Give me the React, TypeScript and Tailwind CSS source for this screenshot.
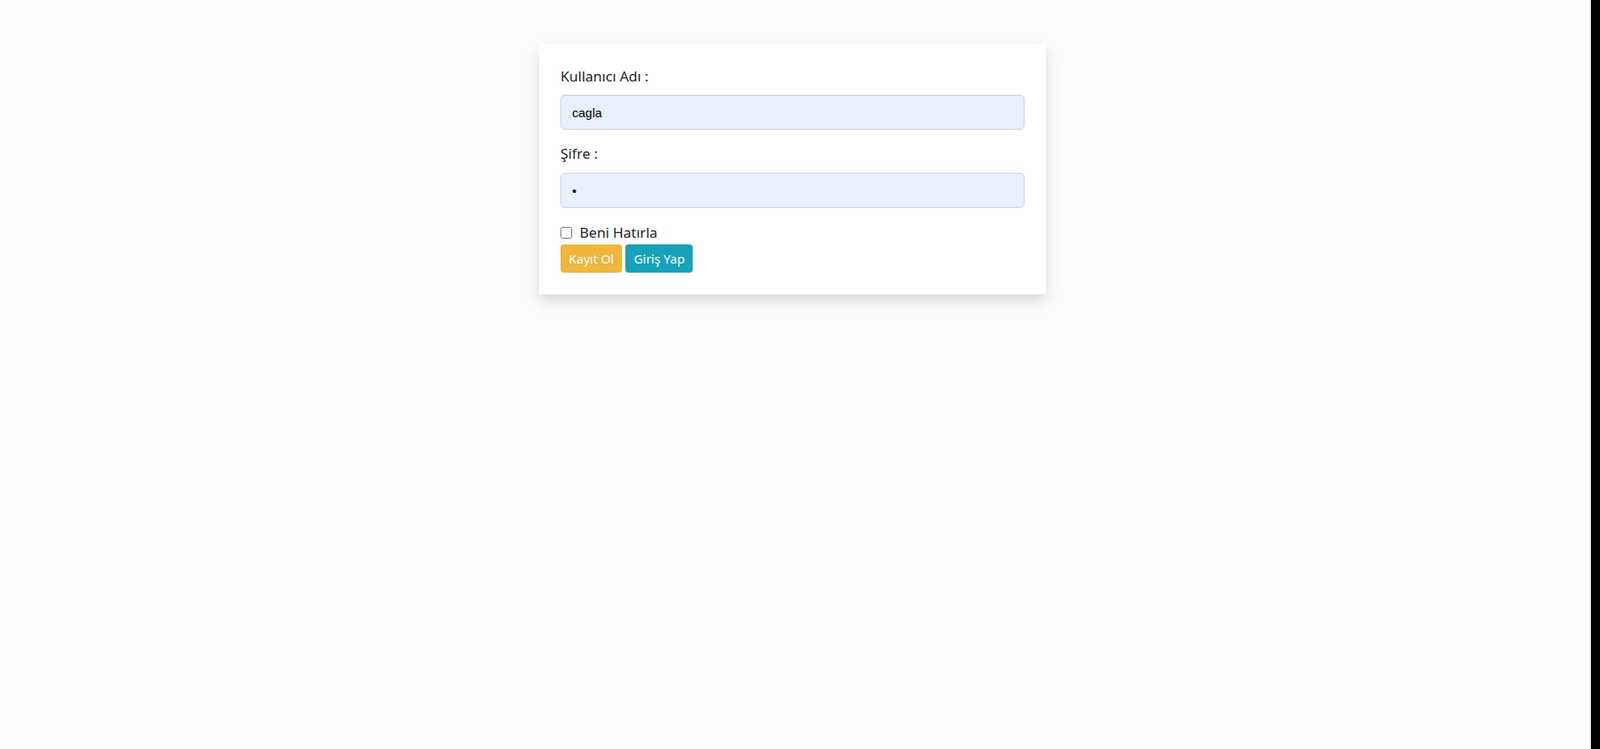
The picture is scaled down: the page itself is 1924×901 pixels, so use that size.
import { useState } from "react"

export default function App() {
  const [username, setUsername] = useState("cagla")
  const [password, setPassword] = useState("a")
  const [remember, setRemember] = useState(false)

  return (
    <div className="flex h-screen w-full bg-[#fdfdfd] font-['Noto_Sans',sans-serif]">
      <main className="flex flex-1 justify-center pr-[7px] pt-[53px]">
        <form
          className="h-[301px] w-[610px] bg-white px-[26px] pb-[25px] pt-[25px] shadow-[0_8px_16px_rgba(0,0,0,0.15)]"
          onSubmit={(e) => e.preventDefault()}
        >
          <div className="mb-[15px]">
            <label htmlFor="username" className="mb-[9px] block text-[17px] leading-[27px] text-[#212529]">
              Kullanıcı Adı :
            </label>
            <input
              id="username"
              type="text"
              value={username}
              onChange={(e) => setUsername(e.target.value)}
              className="block h-[42px] w-full rounded-[5px] border border-[#c9d1dc] bg-[#e8f0fe] px-[13px] font-['Liberation_Sans',Arial,sans-serif] text-[15px] text-black outline-none"
            />
          </div>
          <div className="mb-[16px]">
            <label htmlFor="password" className="mb-[10px] block text-[17px] leading-[27px] text-[#212529]">
              Şifre :
            </label>
            <input
              id="password"
              type="password"
              value={password}
              onChange={(e) => setPassword(e.target.value)}
              className="block h-[42px] w-full rounded-[5px] border border-[#c9d1dc] bg-[#e8f0fe] px-[13px] font-['Liberation_Sans',Arial,sans-serif] text-[15px] text-black outline-none"
            />
          </div>
          <label className="mb-[1px] flex items-center text-[17px] leading-[27px] text-[#212529]">
            <input
              type="checkbox"
              checked={remember}
              onChange={(e) => setRemember(e.target.checked)}
              className="m-0 mr-[9px] h-[14px] w-[14px] accent-[#3b6ea5]"
            />
            Beni Hatırla
          </label>
          <div className="flex gap-[4px]">
            <button type="button" className="h-[34px] rounded-[4px] bg-[#f0b63d] px-[10px] text-[15px] text-white">
              Kayıt Ol
            </button>
            <button type="submit" className="h-[34px] rounded-[4px] bg-[#17a2b8] px-[10px] text-[15px] text-white">
              Giriş Yap
            </button>
          </div>
        </form>
      </main>
      <div className="w-[11px] bg-black" />
    </div>
  )
}
